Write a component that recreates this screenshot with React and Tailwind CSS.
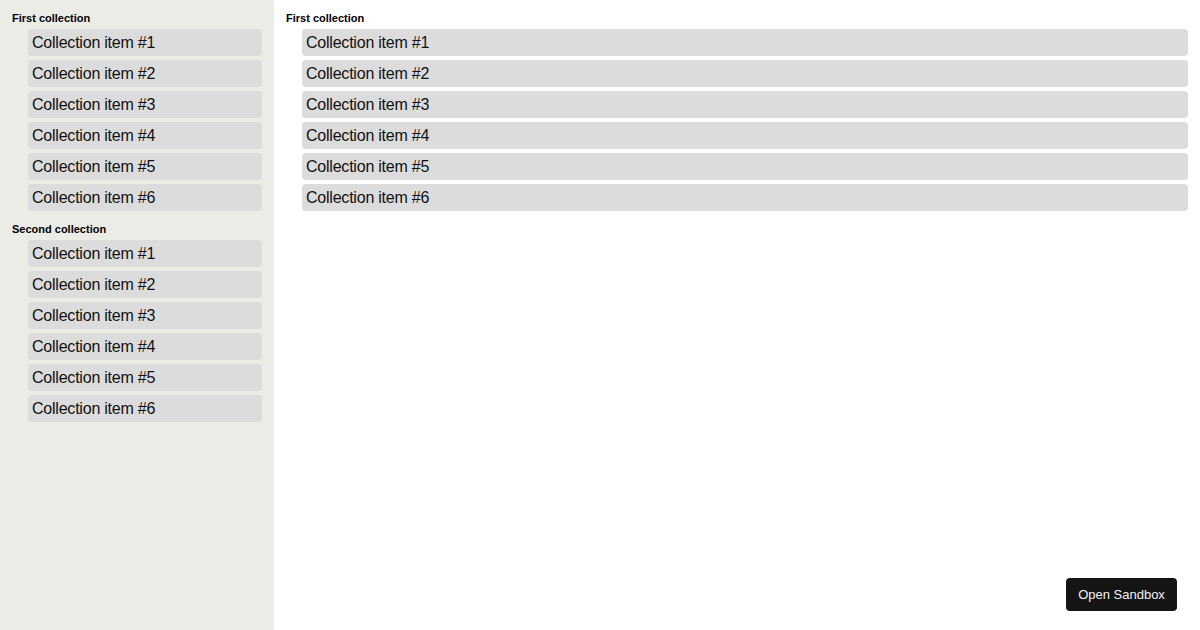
import React from 'react';

const ITEMS = [1, 2, 3, 4, 5, 6].map(n => `Collection item #${n}`);

function Collection({ title, className = '' }) {
  return (
    <div className={className}>
      <h3 className="text-[11px] leading-[13px] font-bold text-black">{title}</h3>
      <ul className="mt-1 ml-4 flex flex-col gap-1">
        {ITEMS.map(item => (
          <li key={item} className="bg-[#dcdcdc] rounded-[4px] px-1 py-1 text-[16px] tracking-[-0.22px] leading-[19px] text-[#111]">
            {item}
          </li>
        ))}
      </ul>
    </div>
  );
}

export default function App() {
  return (
    <div className="h-[630px] flex bg-white" style={{ fontFamily: '"Liberation Sans", Arial, sans-serif' }}>
      <aside className="w-[274px] shrink-0 bg-[#ecece7] px-3 pt-3">
        <Collection title="First collection" />
        <Collection title="Second collection" className="mt-3" />
      </aside>
      <main className="flex-1 px-3 pt-3">
        <Collection title="First collection" />
      </main>
      <button className="fixed right-[23px] bottom-[19px] w-[111px] h-[33px] bg-[#141414] text-[#f2f2f2] text-[13px] rounded-[4px]">
        Open Sandbox
      </button>
    </div>
  );
}
